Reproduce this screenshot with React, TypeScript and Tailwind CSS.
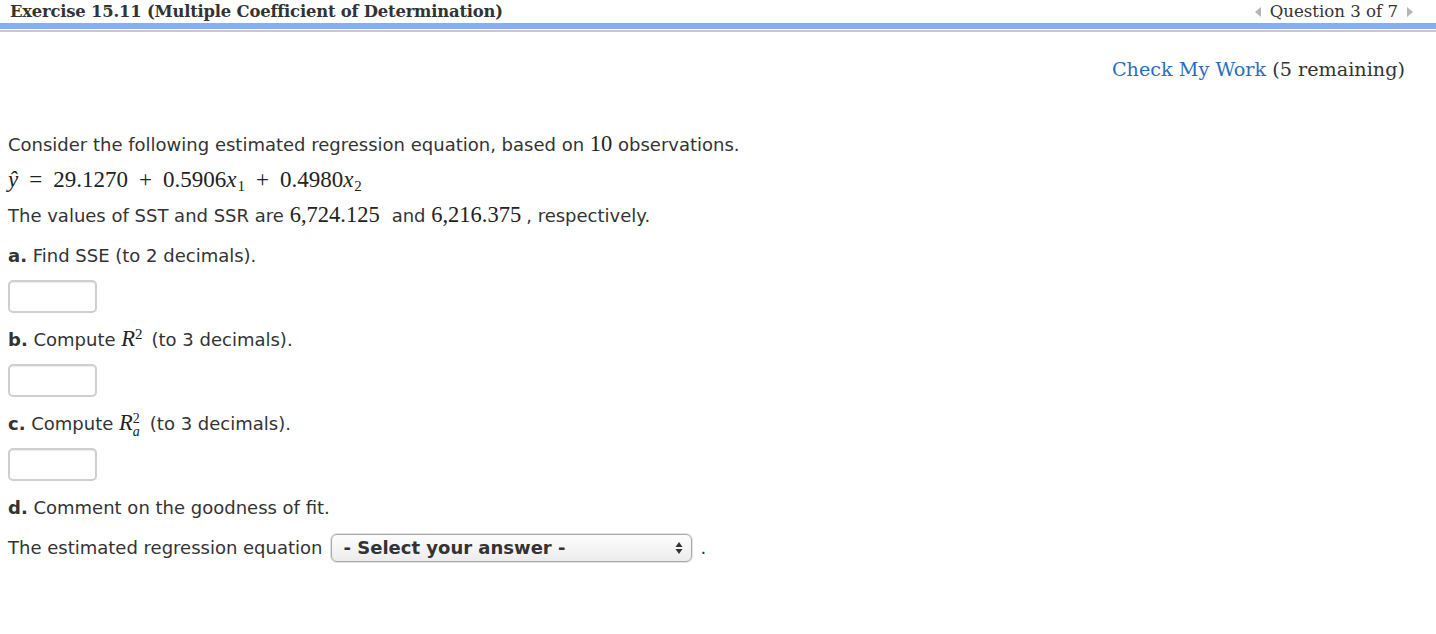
import React from 'react';

const math = { fontFamily: '"Liberation Serif", "DejaVu Serif", serif' };

function AnswerBox() {
  return (
    <div className="h-[33px] w-[89px] rounded-[5px] border-2 border-[#cfcfcf] bg-white shadow-[inset_0_1px_1px_rgba(0,0,0,0.08)]" />
  );
}

function Arrow({ dir }: { dir: 'left' | 'right' }) {
  return (
    <svg width="8" height="12" viewBox="0 0 8 12" className="inline-block">
      {dir === 'left' ? (
        <polygon points="7,1 1,6 7,11" fill="#b5b5b5" />
      ) : (
        <polygon points="1,1 7,6 1,11" fill="#b5b5b5" />
      )}
    </svg>
  );
}

export default function App() {
  return (
    <div className="min-h-[634px] w-[1436px] bg-white text-[#333]" style={{ fontFamily: '"DejaVu Sans", Verdana, sans-serif' }}>
      {/* Header */}
      <div className="flex items-end justify-between px-[10px] h-[23px]" style={{ fontFamily: '"DejaVu Serif", Georgia, serif' }}>
        <h1 className="text-[16.4px] font-bold leading-[22px] text-[#333] tracking-[-0.2px]">
          Exercise 15.11 (Multiple Coefficient of Determination)
        </h1>
        <div className="flex items-center gap-[8px] pr-[12px] text-[16.6px] leading-[22px] text-[#333]">
          <Arrow dir="left" />
          <span>Question 3 of 7</span>
          <Arrow dir="right" />
        </div>
      </div>
      <div className="h-[6px] bg-[#86aff0]" />
      <div className="mt-[1px] h-[2px] bg-[#c9c9c9]" />

      <div className="flex justify-end pr-[31px] pt-[25px]" style={{ fontFamily: '"DejaVu Serif", Georgia, serif' }}>
        <span className="text-[19.2px] leading-[26px]">
          <span className="text-[#2a6ebb]">Check My Work</span>{' '}
          <span className="text-[#333]">(5 remaining)</span>
        </span>
      </div>

      {/* Question body */}
      <div className="px-[8px] pt-[50px] text-[18px] leading-[24px]">
        <p>
          Consider the following estimated regression equation, based on{' '}
          <span style={math} className="text-[22.5px] leading-none text-[#222]">10</span> observations.
        </p>
        <p className="mt-[11px] h-[24px] text-[23px] leading-[24px] text-[#222]" style={math}>
          <i>ŷ</i>
          <span className="mx-[11px]">=</span>29.1270<span className="mx-[11px]">+</span>0.5906<i className="mr-[1px]">x</i>
          <sub className="text-[15px] leading-none">1</sub>
          <span className="mx-[11px]">+</span>0.4980<i className="mr-[1px]">x</i>
          <sub className="text-[15px] leading-none">2</sub>
        </p>
        <p className="mt-[12px]">
          The values of SST and SSR are{' '}
          <span style={math} className="text-[22.5px] leading-none text-[#222]">6,724.125</span>
          <span className="ml-[12px]">and </span>
          <span style={math} className="text-[22.5px] leading-none text-[#222]">6,216.375</span>
          <span className="ml-[5px]">, respectively.</span>
        </p>

        <p className="mt-[16px]">
          <b>a.</b> Find SSE (to 2 decimals).
        </p>
        <div className="mt-[12px]">
          <AnswerBox />
        </div>

        <p className="mt-[15px] h-[24px]">
          <b>b.</b> Compute{' '}
          <span style={math} className="text-[22.5px] leading-none text-[#222]">
            <i>R</i>
            <sup className="text-[15px] leading-none">2</sup>
          </span>
          <span className="ml-[9px]">(to 3 decimals).</span>
        </p>
        <div className="mt-[12px]">
          <AnswerBox />
        </div>

        <p className="mt-[15px] h-[24px]">
          <b>c.</b> Compute{' '}
          <span style={math} className="text-[22.5px] leading-none text-[#222]">
            <i>R</i>
            <span className="relative inline-block w-[8px]">
              <span className="absolute left-0 -top-[18px] text-[14px] leading-none">2</span>
              <i className="absolute left-0 -top-[5px] text-[14px] leading-none">a</i>
            </span>
          </span>
          <span className="ml-[9px]">(to 3 decimals).</span>
        </p>
        <div className="mt-[12px]">
          <AnswerBox />
        </div>

        <p className="mt-[15px]">
          <b>d.</b> Comment on the goodness of fit.
        </p>
        <div className="mt-[14px] flex items-center">
          <span>The estimated regression equation</span>
          <div className="ml-[9px] flex h-[28px] w-[361px] items-center justify-between rounded-[6px] border border-[#a9a9a9] bg-gradient-to-b from-[#fdfdfd] to-[#ececec] pl-[11px] pr-[8px] shadow-[0_0_0_1px_#e2e2e2]">
            <span className="font-bold text-[#333]">- Select your answer -</span>
            <svg width="8" height="14" viewBox="0 0 8 14">
              <polygon points="4,1 7.5,6 0.5,6" fill="#333" />
              <polygon points="0.5,8 7.5,8 4,13" fill="#333" />
            </svg>
          </div>
          <span className="ml-[8px]">.</span>
        </div>
      </div>
    </div>
  );
}
